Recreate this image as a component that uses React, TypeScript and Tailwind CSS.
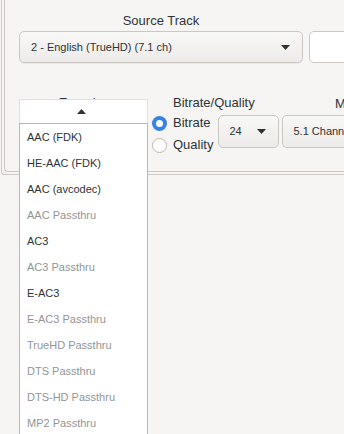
import React from "react";

const font = { fontFamily: '"Liberation Sans", Arial, sans-serif' };

function Arrow({ up = false }: { up?: boolean }) {
  return (
    <svg width="9" height="5" viewBox="0 0 9 5" className="shrink-0">
      {up ? <path d="M0 5 L4.5 0 L9 5 Z" fill="#2e3436" /> : <path d="M0 0 L9 0 L4.5 5 Z" fill="#2e3436" />}
    </svg>
  );
}

const items: { t: string; d: boolean }[] = [
  { t: "AAC (FDK)", d: false },
  { t: "HE-AAC (FDK)", d: false },
  { t: "AAC (avcodec)", d: false },
  { t: "AAC Passthru", d: true },
  { t: "AC3", d: false },
  { t: "AC3 Passthru", d: true },
  { t: "E-AC3", d: false },
  { t: "E-AC3 Passthru", d: true },
  { t: "TrueHD Passthru", d: true },
  { t: "DTS Passthru", d: true },
  { t: "DTS-HD Passthru", d: true },
  { t: "MP2 Passthru", d: true },
];

export default function App() {
  return (
    <div className="relative w-[344px] h-[434px] overflow-hidden bg-[#f6f5f4] text-[#2e3436]" style={font}>
      <div className="ml-px h-[175px] border-l border-b border-[#cfcac5] rounded-bl-[3px]">
        <div className="ml-[2px] h-[172px] border-l border-b border-[#cdc7c2] rounded-bl-[4px]">
          {/* Row 1 */}
          <div className="flex pl-[14px] pt-[12px]">
            <div className="flex flex-col w-[284px] shrink-0">
              <div className="text-[13px] leading-[17px] text-center">Source Track</div>
              <div className="mt-[2px] h-[32px] rounded-[5px] border border-[#cdc7c2] bg-gradient-to-b from-[#f8f8f7] to-[#edebe9] shadow-[0_1px_0_rgba(0,0,0,0.05)] flex items-center pl-[11px] pr-[12px]">
                <span className="text-[11px] flex-1 pt-px">2 - English (TrueHD) (7.1 ch)</span>
                <Arrow />
              </div>
            </div>
            <div className="ml-[6px] mt-[19px] h-[32px] w-[60px] shrink-0 rounded-l-[5px] border border-[#cdc7c2] bg-white" />
          </div>

          {/* Row 2 */}
          <div className="flex pl-[14px] mt-[31px]">
            <div className="w-[128px] shrink-0 flex flex-col">
              <div className="text-[13px] leading-[17px] text-center">Encoder</div>
              <div className="mt-[4px] h-[33px] rounded-[5px] border border-[#cdc7c2] bg-[#efeeec]" />
            </div>
            <div className="ml-[5px] flex flex-col shrink-0">
              <div className="text-[13px] leading-[17px] pl-[21px]">Bitrate/Quality</div>
              <div className="flex mt-[4px]">
                <div className="flex flex-col gap-[4px] -mt-[1px]">
                  <div className="flex items-center gap-[6px] h-[18px]">
                    <div className="w-[15px] h-[15px] rounded-full bg-[#3584e4] flex items-center justify-center">
                      <div className="w-[7px] h-[7px] rounded-full bg-white" />
                    </div>
                    <span className="text-[13px]">Bitrate</span>
                  </div>
                  <div className="flex items-center gap-[6px] h-[18px]">
                    <div className="w-[15px] h-[15px] rounded-full bg-white border border-[#bfb8b1]" />
                    <span className="text-[13px]">Quality</span>
                  </div>
                </div>
                <div className="ml-[5px] w-[61px] h-[33px] rounded-[5px] border border-[#cdc7c2] bg-gradient-to-b from-[#f8f8f7] to-[#edebe9] flex items-center pl-[10px] pr-[12px]">
                  <span className="text-[11px] flex-1">24</span>
                  <Arrow />
                </div>
                <div className="ml-[3px] w-[100px] h-[33px] rounded-l-[5px] border border-r-0 border-[#cdc7c2] bg-gradient-to-b from-[#f8f8f7] to-[#edebe9] flex items-center pl-[10px] overflow-hidden whitespace-nowrap">
                  <span className="text-[11px]">5.1 Channels</span>
                </div>
              </div>
            </div>
            <div className="absolute left-[335px] top-[95px] text-[13px] leading-[17px] whitespace-nowrap">Mixdown</div>
          </div>
        </div>
      </div>

      {/* Popup menu */}
      <div className="absolute left-[19px] top-[99px] w-[129px]">
        <div className="h-[24px] bg-white border border-b-0 border-[#e2dfdc] flex items-center justify-center pr-[4px]">
          <Arrow up />
        </div>
        <div className="bg-white border border-[#bdb8b3] h-[330px] overflow-hidden">
          {items.map((it) => (
            <div
              key={it.t}
              className={`h-[26px] flex items-center pl-[7px] text-[11px] ${it.d ? "text-[#929595]" : "text-[#2e3436]"}`}
            >
              {it.t}
            </div>
          ))}
        </div>
      </div>
    </div>
  );
}
